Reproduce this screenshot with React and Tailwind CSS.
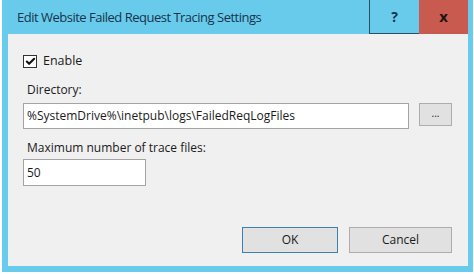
import { Check } from 'lucide-react';

export default function App() {
  return (
    <div className="w-[474px] h-[274px] bg-white overflow-hidden" style={{ fontFamily: '"Open Sans", "Noto Sans", sans-serif' }}>
      <div className="ml-[2px] w-[471px] h-[272px] bg-[#69cbec] flex flex-col">
        {/* Title bar */}
        <div className="h-[34px] flex pr-[5px]">
          <div className="flex-1 pl-[15px] pt-[8px] text-[13px] text-[#17334a] tracking-[-0.5px]">
            Edit Website Failed Request Tracing Settings
          </div>
          <div className="w-[50px] h-[34px] border-l border-b border-[#2c4d63] flex items-center justify-center text-[14px] font-bold text-[#17334a]">?</div>
          <div className="w-[49px] h-[34px] bg-[#c85a4f] flex items-center justify-center text-[15px] font-bold text-[#1e1412] pb-[2px]">x</div>
        </div>

        {/* Body */}
        <div className="flex-1 mx-[6px] mr-[5px] mb-[6px] bg-[#f0f0f0] flex flex-col pl-[15px] text-[12px] text-[#1a1a1a]">
          <div className="flex items-center mt-[20px] h-[14px]">
            <div className="w-[14px] h-[13px] border border-[#333] bg-white flex items-center justify-center">
              <Check size={11} strokeWidth={4.5} className="text-[#111]" />
            </div>
            <span className="ml-[6px] text-[12.5px]">Enable</span>
          </div>

          <div className="mt-[14px] ml-[4px] leading-[16px]">Directory:</div>
          <div className="flex items-start mt-[5px]">
            <div className="w-[386px] h-[26px] bg-white border border-[#a3a3a3] flex items-center pl-[3px]">
              %SystemDrive%\inetpub\logs\FailedReqLogFiles
            </div>
            <div className="ml-[10px] w-[33px] h-[23px] bg-[#e1e1e1] border border-[#adadad] flex items-center justify-center text-[10px] leading-none pb-[3px]">...</div>
          </div>

          <div className="mt-[11px] ml-[4px] leading-[16px]">Maximum number of trace files:</div>
          <div className="mt-[3px] w-[123px] h-[27px] bg-white border border-[#a3a3a3] flex items-center pl-[3px]">50</div>

          <div className="mt-auto mb-[13px] flex justify-end pr-[16px] gap-[11px]">
            <div className="w-[96px] h-[26px] bg-[#e1e1e1] border border-[#3c7fb1] flex items-center justify-center">OK</div>
            <div className="w-[103px] h-[26px] bg-[#e1e1e1] border border-[#adadad] flex items-center justify-center">Cancel</div>
          </div>
        </div>
      </div>
    </div>
  );
}
